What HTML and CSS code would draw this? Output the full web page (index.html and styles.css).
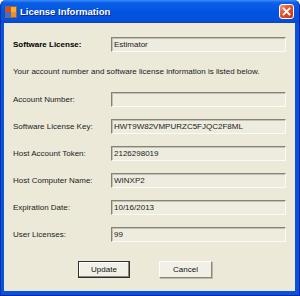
FILE: index.html
```html
<!DOCTYPE html>
<html lang="en">
  <head>
    <meta charset="UTF-8" />
    <meta name="viewport" content="width=device-width, initial-scale=1.0" />
    <title>License Information</title>
    <link rel="stylesheet" href="styles.css">
  </head>
  <body>
    <div class="window">
      <!-- Title bar -->
      <div class="titlebar">
        <svg class="app-icon" width="12" height="12" viewBox="0 0 12 12">
          <rect x="0" y="0" width="12" height="12" fill="#e8e4d4" />
          <rect x="1" y="1" width="5" height="5" fill="#e04a1a" />
          <rect x="6" y="1" width="5" height="5" fill="#f6b03a" />
          <rect x="1" y="6" width="5" height="5" fill="#3a6fd8" />
          <rect x="6" y="6" width="5" height="5" fill="#f08c2a" />
          <rect x="0.5" y="0.5" width="11" height="11" fill="none" stroke="#8a6a3a" stroke-width="1" />
        </svg>
        <span class="title">License Information</span>
        <button class="close-btn" type="button">
          <svg width="9" height="9" viewBox="0 0 9 9">
            <path d="M1.5 1.5 L7.5 7.5 M7.5 1.5 L1.5 7.5" stroke="#fff" stroke-width="1.8" stroke-linecap="square" />
          </svg>
        </button>
      </div>

      <div class="content">
        <div class="row">
          <label class="label bold">Software License:</label>
          <div class="field">Estimator</div>
        </div>

        <p class="desc">Your account number and software license information is listed below.</p>

        <div class="fields">
          <div class="row">
            <label class="label">Account Number:</label>
            <div class="field"></div>
          </div>
          <div class="row">
            <label class="label">Software License Key:</label>
            <div class="field">HWT9W82VMPURZC5FJQC2F8ML</div>
          </div>
          <div class="row">
            <label class="label">Host Account Token:</label>
            <div class="field">2126298019</div>
          </div>
          <div class="row">
            <label class="label">Host Computer Name:</label>
            <div class="field">WINXP2</div>
          </div>
          <div class="row">
            <label class="label">Expiration Date:</label>
            <div class="field">10/16/2013</div>
          </div>
          <div class="row">
            <label class="label">User Licenses:</label>
            <div class="field">99</div>
          </div>
        </div>

        <div class="buttons">
          <button class="btn default" type="button">Update</button>
          <button class="btn" type="button">Cancel</button>
        </div>
      </div>
    </div>
  </body>
</html>
```

FILE: styles.css
```css
html, body {
  margin: 0;
  padding: 0;
}
body {
  width: 300px;
  height: 296px;
  font-family: "Liberation Sans", Arial, sans-serif;
  font-size: 8px;
  color: #000;
  background: #fff;
}

/* Window frame */
.window {
  box-sizing: border-box;
  width: 300px;
  height: 296px;
  display: flex;
  flex-direction: column;
  background: #0a52dc;
  border-radius: 6px 6px 0 0;
  border-left: 1px solid #0831a8;
  border-right: 1px solid #0727a0;
  border-bottom: 1px solid #06279a;
  padding: 0 4px 4px 3px;
}

.titlebar {
  height: 23px;
  margin: 0 -4px 0 -3px;
  padding: 0 5px 0 4px;
  display: flex;
  align-items: center;
  border-radius: 6px 6px 0 0;
  background: linear-gradient(to bottom, #3d8dfa 0%, #0a5fe6 12%, #0254e0 50%, #0550dc 85%, #0a46c4 100%);
}
.app-icon {
  flex: none;
  margin-right: 3px;
}
.title {
  flex: 1;
  color: #fff;
  font-weight: bold;
  font-size: 9.5px;
  text-shadow: 1px 1px 0 #0a2a80;
}
.close-btn {
  width: 15px;
  height: 15px;
  padding: 0;
  display: flex;
  align-items: center;
  justify-content: center;
  border: 1px solid #fff;
  border-radius: 3px;
  background: linear-gradient(135deg, #f09a7c 0%, #e2502a 45%, #c83a14 100%);
}

/* Dialog body */
.content {
  flex: 1;
  background: #ece9d8;
  padding: 14px 9px 0 9px;
}
.row {
  display: grid;
  grid-template-columns: 98px 175px;
  align-items: center;
}
.label {
  color: #222;
}
.bold {
  font-weight: bold;
  color: #000;
}
.field {
  box-sizing: border-box;
  height: 15px;
  padding: 1px 0 0 2px;
  line-height: 12px;
  color: #222;
  background: #eeebdf;
  border: 1px solid;
  border-color: #858377 #fbfaf5 #fbfaf5 #858377;
  box-shadow: inset 1px 1px 0 #c4c1b2;
  white-space: nowrap;
  overflow: hidden;
}
.desc {
  margin: 14px 0;
  line-height: 12px;
  color: #222;
}
.fields {
  display: flex;
  flex-direction: column;
  gap: 12px;
}

.buttons {
  display: flex;
  gap: 29px;
  margin-top: 19px;
  padding-left: 65px;
}
.btn {
  box-sizing: border-box;
  width: 53px;
  height: 17px;
  padding: 0;
  font-family: "Liberation Sans", Arial, sans-serif;
  font-size: 8px;
  color: #111;
  background: #f2f0e6;
  border: 1px solid;
  border-color: #fff #8a877a #8a877a #fff;
  box-shadow: 1px 1px 0 #bcb9aa;
}
.btn.default {
  width: 52px;
  border: 1px solid #303030;
  box-shadow: inset -1px -1px 0 #8a877a, inset 1px 1px 0 #fff;
}
```
